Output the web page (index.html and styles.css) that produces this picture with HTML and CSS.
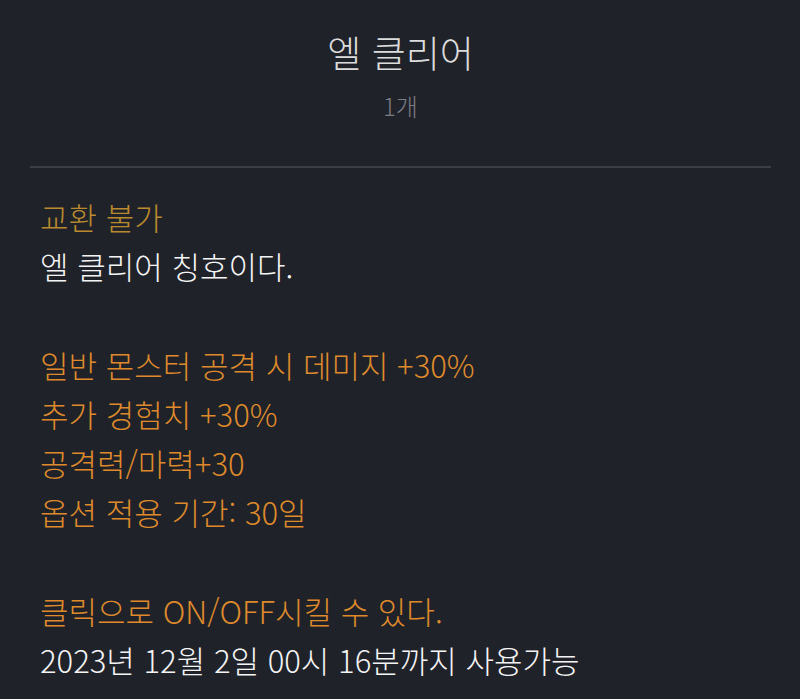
FILE: index.html
```html
<!DOCTYPE html>
<html lang="ko">
<head>
<meta charset="utf-8">
<link rel="stylesheet" href="styles.css">
</head>
<body>
<div class="tooltip">
  <header class="head">
    <h1 class="title">엘 클리어</h1>
    <div class="count">1개</div>
  </header>
  <hr class="divider">
  <div class="desc">
    <p class="line gold">교환 불가</p>
    <p class="line white">엘 클리어 칭호이다.</p>
    <p class="line blank"></p>
    <p class="line orange">일반 몬스터 공격 시 데미지 +30%</p>
    <p class="line orange">추가 경험치 +30%</p>
    <p class="line orange">공격력/마력+30</p>
    <p class="line orange">옵션 적용 기간: 30일</p>
    <p class="line blank"></p>
    <p class="line orange">클릭으로 ON/OFF시킬 수 있다.</p>
    <p class="line white">2023년 12월 2일 00시 16분까지 사용가능</p>
  </div>
</div>
</body>
</html>
```
FILE: styles.css
```css
html, body {
  margin: 0;
  padding: 0;
  background: #20222a;
  height: 100%;
  overflow: hidden;
}
body {
  font-family: "Noto Sans CJK KR", "Noto Sans", sans-serif;
  font-weight: 300;
}
.tooltip {
  padding: 22px 29px 0 30px;
}
.head {
  display: flex;
  flex-direction: column;
  align-items: center;
}
.title {
  margin: 0;
  font-size: 37px;
  font-weight: 300;
  color: #dcdcdc;
  line-height: 60px;
}
.count {
  margin-top: 5px;
  font-size: 24px;
  color: #7b7d83;
  line-height: 38px;
}
.divider {
  margin: 41px 0 0;
  border: 0;
  height: 2px;
  background: #3c3e46;
}
.desc {
  padding: 24px 0 0 10px;
}
.line {
  margin: 0;
  font-size: 31px;
  line-height: 49.2px;
  height: 49.2px;
  white-space: nowrap;
}
.gold { color: #b98a2e; }
.white { color: #f4f4f4; }
.orange { color: #df8a2a; }
```
